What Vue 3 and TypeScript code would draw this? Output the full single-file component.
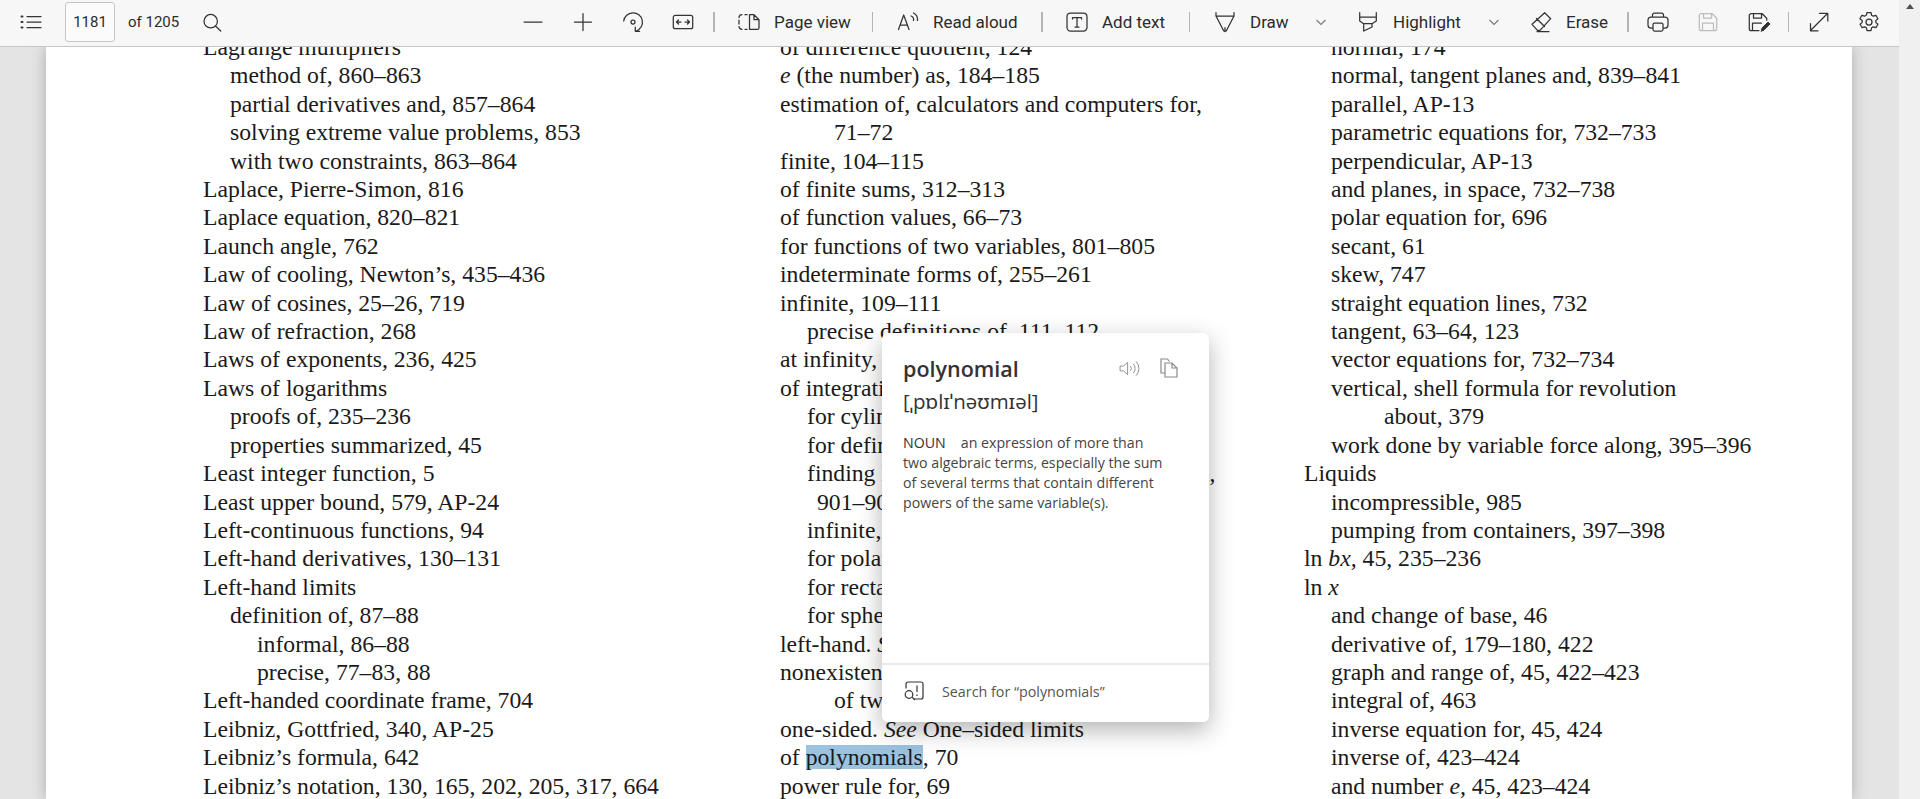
<script setup lang="ts">
type Line = { text: string; indent?: number }
type Tool = {
  icon?: string
  extra?: string
  label?: string
  width: number
  chevron?: boolean
  muted?: boolean
  sep?: 'thick' | 'thin'
}

const paths: Record<string, string> = {
  minus: 'M3 12h18',
  plus: 'M3.5 12h17M12 3.5v17',
  rotate: 'M2.7 11A9.4 9.4 0 1 1 15.3 21M14.3 17v4.3h4.3M14 12a2 2 0 1 1-4 0 2 2 0 0 1 4 0z',
  fit: 'M4.3 5.3h15.4a2 2 0 0 1 2 2v9.4a2 2 0 0 1-2 2H4.3a2 2 0 0 1-2-2V7.3a2 2 0 0 1 2-2zM5.5 12h4.5M5.5 12l2-2M5.5 12l2 2M18.5 12H14M18.5 12l-2-2M18.5 12l-2 2',
  pages: 'M12.5 4.7H17l5 5v8a1.6 1.6 0 0 1-1.6 1.6h-7.9zM17 4.7v5h5M10 4.7H8M5 4.7A3 3 0 0 0 2 7.3M2 10v4M2 16.7a3 3 0 0 0 3 2.6M8 19.3h2',
  aloud: 'M2.5 19.5L7.7 5l5.3 14.5M4.2 15h7M15 6a4 4 0 0 1 2.5 4.5M17.5 3a7.5 7.5 0 0 1 4 7.5',
  addText: 'M5.5 3h13A3.5 3.5 0 0 1 22 6.5v11a3.5 3.5 0 0 1-3.5 3.5h-13A3.5 3.5 0 0 1 2 17.500v-11A3.500 3.500 0 0 1 5.500 3zM7.500 9V7.500h9V9M12 7.500v9.500M10 17h4',
  draw: 'M3 2.500V6l7.500 14.500a1.700 1.700 0 0 0 3 0L21 6V2.500M3.500 6h17M12 17.500v4',
  highlight: 'M3.700 2.500V11l4 2.700H16l4.300-2.700V2.500M3.700 7h16.600M7.700 13.700V21L16 17v-3.300',
  erase: 'M15.700 2.700l6 6L11 20.300H8.500L3 14.300zM7.500 8.500l8 8M8 21.500h12',
  print: 'M7 18H5a3 3 0 0 1-3-3v-5a3 3 0 0 1 3-3h14a3 3 0 0 1 3 3v5a3 3 0 0 1-3 3h-2M6.500 7V5a2 2 0 0 1 2-2h7a2 2 0 0 1 2 2v2M8.500 13h7a1.500 1.500 0 0 1 1.500 1.500v5a1.500 1.500 0 0 1-1.500 1.500h-7A1.500 1.500 0 0 1 7 19.500v-5A1.500 1.500 0 0 1 8.500 13z',
  save: 'M5.300 3.500H16l4.700 4.700v10.500a2 2 0 0 1-2 2H5.300a2 2 0 0 1-2-2V5.500a2 2 0 0 1 2-2zM7.500 3.500V8h8V3.500M6.500 20.500V13h11v7.500',
  saveAs: 'M13 20.700H5.300a2 2 0 0 1-2-2V5.500a2 2 0 0 1 2-2H16l4.700 4.700v2M7.500 3.500V8h8V3.500M6.500 20.500V13h9',
  expand: 'M3.500 20.500l17-17M3.500 13.500v7.300H11M12.500 3.300h8.300V11',
  gear: 'M10 2.500h4l.6 2.800 1.600.9 2.700-.9 2 3.400-2.100 1.900v1.800l2.100 1.900-2 3.400-2.700-.9-1.600.9-.6 2.800h-4l-.6-2.800-1.600-.9-2.700.9-2-3.400 2.100-1.900v-1.800L2.900 8.700l2-3.400 2.700.9 1.600-.9zM15 12a3 3 0 1 1-6 0 3 3 0 0 1 6 0z',
  list: 'M9 6.500h14M9 12h14M9 17.500h14',
  search: 'M17.400 11.200a6.700 6.700 0 1 1-13.400 0 6.700 6.700 0 0 1 13.400 0zM15.500 16l5.200 5'
}

const tools: Tool[] = [
  { icon: 'minus', width: 50 },
  { icon: 'plus', width: 50 },
  { icon: 'rotate', width: 50 },
  { icon: 'fit', width: 50 },
  { sep: 'thick', width: 11 },
  { icon: 'pages', label: 'Page view', width: 148 },
  { sep: 'thin', width: 11 },
  { icon: 'aloud', label: 'Read aloud', width: 158 },
  { sep: 'thick', width: 11 },
  { icon: 'addText', label: 'Add text', width: 137 },
  { sep: 'thin', width: 11 },
  { icon: 'draw', label: 'Draw', width: 143, chevron: true },
  { icon: 'highlight', label: 'Highlight', width: 173, chevron: true },
  { icon: 'erase', label: 'Erase', width: 111 },
  { sep: 'thick', width: 11 },
  { icon: 'print', width: 50 },
  { icon: 'save', width: 50, muted: true },
  { icon: 'saveAs', width: 50, extra: 'M14 22.500l1-4.500 7-7 3 3-7 7z' },
  { sep: 'thin', width: 11 },
  { icon: 'expand', width: 50 },
  { icon: 'gear', width: 50 }
]

const columns: Line[][] = [
  [
    { text: 'Lagrange multipliers' },
    { text: 'method of, 860–863', indent: 27 },
    { text: 'partial derivatives and, 857–864', indent: 27 },
    { text: 'solving extreme value problems, 853', indent: 27 },
    { text: 'with two constraints, 863–864', indent: 27 },
    { text: 'Laplace, Pierre-Simon, 816' },
    { text: 'Laplace equation, 820–821' },
    { text: 'Launch angle, 762' },
    { text: 'Law of cooling, Newton’s, 435–436' },
    { text: 'Law of cosines, 25–26, 719' },
    { text: 'Law of refraction, 268' },
    { text: 'Laws of exponents, 236, 425' },
    { text: 'Laws of logarithms' },
    { text: 'proofs of, 235–236', indent: 27 },
    { text: 'properties summarized, 45', indent: 27 },
    { text: 'Least integer function, 5' },
    { text: 'Least upper bound, 579, AP-24' },
    { text: 'Left-continuous functions, 94' },
    { text: 'Left-hand derivatives, 130–131' },
    { text: 'Left-hand limits' },
    { text: 'definition of, 87–88', indent: 27 },
    { text: 'informal, 86–88', indent: 54 },
    { text: 'precise, 77–83, 88', indent: 54 },
    { text: 'Left-handed coordinate frame, 704' },
    { text: 'Leibniz, Gottfried, 340, AP-25' },
    { text: 'Leibniz’s formula, 642' },
    { text: 'Leibniz’s notation, 130, 165, 202, 205, 317, 664' }
  ],
  [
    { text: 'of difference quotient, 124' },
    { text: '<i>e</i> (the number) as, 184–185' },
    { text: 'estimation of, calculators and computers for,' },
    { text: '71–72', indent: 54 },
    { text: 'finite, 104–115' },
    { text: 'of finite sums, 312–313' },
    { text: 'of function values, 66–73' },
    { text: 'for functions of two variables, 801–805' },
    { text: 'indeterminate forms of, 255–261' },
    { text: 'infinite, 109–111' },
    { text: 'precise definitions of, 111–112', indent: 27 },
    { text: 'at infinity, 91–98' },
    { text: 'of integration' },
    { text: 'for cylinders, 896', indent: 27 },
    { text: 'for definite integrals, 884', indent: 27 },
    { text: 'finding limits of integration, triple integral,', indent: 27 },
    { text: '901–904', indent: 37 },
    { text: 'infinite, 465', indent: 27 },
    { text: 'for polar integrals, 890', indent: 27 },
    { text: 'for rectangular, 883', indent: 27 },
    { text: 'for spheres, 910', indent: 27 },
    { text: 'left-hand. <i>See</i> Left-hand limits' },
    { text: 'nonexistent, 82' },
    { text: 'of two variables, 803', indent: 54 },
    { text: 'one-sided. <i>See</i> One–sided limits' },
    { text: 'of <mark>polynomials</mark>, 70' },
    { text: 'power rule for, 69' }
  ],
  [
    { text: 'normal, 174', indent: 27 },
    { text: 'normal, tangent planes and, 839–841', indent: 27 },
    { text: 'parallel, AP-13', indent: 27 },
    { text: 'parametric equations for, 732–733', indent: 27 },
    { text: 'perpendicular, AP-13', indent: 27 },
    { text: 'and planes, in space, 732–738', indent: 27 },
    { text: 'polar equation for, 696', indent: 27 },
    { text: 'secant, 61', indent: 27 },
    { text: 'skew, 747', indent: 27 },
    { text: 'straight equation lines, 732', indent: 27 },
    { text: 'tangent, 63–64, 123', indent: 27 },
    { text: 'vector equations for, 732–734', indent: 27 },
    { text: 'vertical, shell formula for revolution', indent: 27 },
    { text: 'about, 379', indent: 80 },
    { text: 'work done by variable force along, 395–396', indent: 27 },
    { text: 'Liquids' },
    { text: 'incompressible, 985', indent: 27 },
    { text: 'pumping from containers, 397–398', indent: 27 },
    { text: 'ln <i>bx,</i> 45, 235–236' },
    { text: 'ln <i>x</i>' },
    { text: 'and change of base, 46', indent: 27 },
    { text: 'derivative of, 179–180, 422', indent: 27 },
    { text: 'graph and range of, 45, 422–423', indent: 27 },
    { text: 'integral of, 463', indent: 27 },
    { text: 'inverse equation for, 45, 424', indent: 27 },
    { text: 'inverse of, 423–424', indent: 27 },
    { text: 'and number <i>e,</i> 45, 423–424', indent: 27 }
  ]
]
</script>

<template>
  <div class="app">
    <div class="main">
      <header class="toolbar">
        <button class="tool list-tool">
          <svg class="icon" viewBox="0 0 24 24"><path :d="paths.list" /><path class="dots" d="M3.500 6.500h1M3.500 12h1M3.500 17.500h1" /></svg>
        </button>
        <div class="page-box">1181</div>
        <span class="page-count">of 1205</span>
        <button class="tool search-tool">
          <svg class="icon" viewBox="0 0 24 24"><path :d="paths.search" /></svg>
        </button>

        <div class="tools">
          <template v-for="(tool, i) in tools" :key="i">
            <div v-if="tool.sep" class="sep" :class="tool.sep" :style="{ width: tool.width + 'px' }"></div>
            <button
              v-else
              class="tool"
              :class="{ labelled: tool.label, muted: tool.muted }"
              :style="{ width: tool.width + 'px' }"
            >
              <svg class="icon" viewBox="0 0 24 24">
                <path :d="paths[tool.icon!]" />
                <path v-if="tool.extra" class="solid" :d="tool.extra" />
              </svg>
              <span v-if="tool.label">{{ tool.label }}</span>
              <svg v-if="tool.chevron" class="chevron" viewBox="0 0 12 12"><path d="M1.500 4l4.500 4.500L10.500 4" /></svg>
            </button>
          </template>
        </div>
      </header>

      <main class="viewer">
        <article class="page">
          <div class="columns">
            <div v-for="(column, c) in columns" :key="c" class="column">
              <div
                v-for="(line, l) in column"
                :key="l"
                class="line"
                :style="{ paddingLeft: (line.indent ?? 0) + 'px' }"
                v-html="line.text"
              ></div>
            </div>
          </div>
        </article>

        <section class="popup">
          <div class="popup-body">
            <div class="popup-head">
              <h2>polynomial</h2>
              <svg class="speaker" viewBox="0 0 22 18">
                <path d="M1 6.500h3.500L9 2.500v13L4.500 11.500H1zM12 6.500a4 4 0 0 1 0 5M15 4a7.500 7.500 0 0 1 0 10M18 1.500a11 11 0 0 1 0 15" />
              </svg>
              <svg class="copy" viewBox="0 0 18 20">
                <path d="M5 15H1V1h6.500l2 2.500M5 5h7l5 5v9H5zM12 5v5h5" />
              </svg>
            </div>
            <div class="phonetic">[ˌpɒlɪˈnəʊmɪəl]</div>
            <p class="definition"><b>NOUN</b>an expression of more than two algebraic terms, especially the sum of several terms that contain different powers of the same variable(s).</p>
          </div>
          <footer class="popup-foot">
            <svg class="bing" viewBox="0 0 20 20">
              <path d="M2 7.500V3a2 2 0 0 1 2-2h13a2 2 0 0 1 2 2v13a2 2 0 0 1-2 2h-7M13 4.500v6.500M13 13.500v1.500" />
              <circle cx="5" cy="13.500" r="3.800" />
              <path d="M8 16.200l2.800 2.800" />
            </svg>
            <span>Search for “polynomials”</span>
          </footer>
        </section>
      </main>
    </div>

    <aside class="scrollbar"><span class="arrow"></span></aside>
  </div>
</template>

<style>
html,
body {
  margin: 0;
  height: 100%;
  overflow: hidden;
}
</style>

<style scoped>
.app {
  display: flex;
  height: 100vh;
  font-family: "Open Sans", "Noto Sans", sans-serif;
}

.main {
  flex: 1;
  min-width: 0;
  display: flex;
  flex-direction: column;
  position: relative;
}

.toolbar {
  height: 47px;
  box-sizing: border-box;
  padding-bottom: 3px;
  flex: none;
  display: flex;
  align-items: center;
  background: #f7f7f7;
  border-bottom: 1px solid #c6c6c6;
  position: relative;
  z-index: 2;
  font-family: Roboto, "Open Sans", sans-serif;
  font-size: 17px;
  color: #2b2b2b;
}

.tool {
  height: 100%;
  flex: none;
  display: flex;
  align-items: center;
  justify-content: center;
  border: 0;
  padding: 0;
  background: none;
  font: inherit;
  color: inherit;
}

.tool.labelled {
  justify-content: flex-start;
  padding-left: 18px;
  gap: 13px;
}

.icon {
  width: 24px;
  height: 24px;
  flex: none;
  overflow: visible;
  fill: none;
  stroke: #333;
  stroke-width: 1.25;
  stroke-linejoin: round;
  stroke-linecap: round;
}

.dots {
  stroke-width: 2;
}

.solid {
  fill: #333;
  stroke: #f7f7f7;
  stroke-width: 1;
}

.muted .icon {
  stroke: #bdbdbd;
}

.chevron {
  width: 12px;
  height: 12px;
  margin-left: auto;
  margin-right: 11px;
  fill: none;
  stroke: #777;
  stroke-width: 1.1;
}

.list-tool {
  width: 60px;
}

.page-box {
  width: 48px;
  height: 38px;
  margin-left: 5px;
  border: 1px solid #c6c6c6;
  border-radius: 3px;
  background: #fbfbfb;
  display: flex;
  align-items: center;
  justify-content: center;
  font-size: 15px;
}

.page-count {
  width: 59px;
  margin-left: 13px;
  font-size: 15px;
  white-space: nowrap;
}

.search-tool {
  width: 50px;
}

.tools {
  display: flex;
  height: 100%;
  margin-left: 271px;
}

.sep {
  flex: none;
  display: flex;
  justify-content: center;
}

.sep::before {
  content: "";
  align-self: center;
  height: 20px;
  background: #b5b5b5;
}

.sep.thick::before {
  width: 2px;
}

.sep.thin::before {
  width: 1px;
}

.viewer {
  flex: 1;
  min-height: 0;
  position: relative;
  overflow: hidden;
  background: #e4e4e4;
  padding: 0 47px 0 46px;
}

.page {
  height: 100%;
  overflow: hidden;
  background: #fff;
  box-shadow: 0 0 14px rgba(0, 0, 0, 0.25);
  padding-left: 157px;
}

.columns {
  display: grid;
  grid-template-columns: 577px 524px 1fr;
  margin-top: -14px;
  font-family: "Liberation Serif", serif;
  font-size: 23.700px;
  color: #1a1a1a;
}

.line {
  height: 28.420px;
  line-height: 28.420px;
  white-space: nowrap;
}

.line :deep(mark) {
  display: inline-block;
  line-height: 24px;
  background: #9bc2de;
  color: inherit;
}

.popup {
  position: absolute;
  left: 882px;
  top: 286px;
  width: 327px;
  height: 389px;
  box-sizing: border-box;
  display: flex;
  flex-direction: column;
  background: #fff;
  border-radius: 6px;
  box-shadow: 0 8px 24px rgba(0, 0, 0, 0.3);
  color: #444;
}

.popup-body {
  flex: 1;
  padding: 19px 21px 0;
}

.popup-head {
  display: flex;
  align-items: center;
  height: 32px;
}

.popup-head h2 {
  flex: 1;
  margin: 0;
  font-size: 21.500px;
  font-weight: 600;
  color: #333;
}

.speaker {
  width: 21px;
  height: 17px;
  fill: none;
  stroke: #8a8a8a;
  stroke-width: 1;
}

.copy {
  width: 18px;
  height: 20px;
  margin: 0 10px 0 20px;
  fill: none;
  stroke: #8a8a8a;
  stroke-width: 1.2;
}

.phonetic {
  margin-top: 3px;
  font-size: 20.500px;
  color: #333;
}

.definition {
  margin: 18px 0 0;
  width: 264px;
  font-size: 14.200px;
  line-height: 20px;
}

.definition b {
  font-weight: 500;
  color: #333;
  margin-right: 15px;
}

.popup-foot {
  flex: none;
  height: 59px;
  box-sizing: border-box;
  padding: 0 0 5px 22px;
  border-top: 2px solid #e9e9e9;
  display: flex;
  align-items: center;
  gap: 18px;
  font-size: 14.300px;
  color: #555;
}

.bing {
  width: 20px;
  height: 20px;
  flex: none;
  fill: none;
  stroke: #333;
  stroke-width: 1.2;
}

.scrollbar {
  width: 21px;
  flex: none;
  background: #f0f0f0;
  display: flex;
  justify-content: center;
  padding-top: 4px;
  box-sizing: border-box;
}

.arrow {
  width: 0;
  height: 0;
  border: 4.500px solid transparent;
  border-top: 0;
  border-bottom: 5px solid #505050;
}
</style>
